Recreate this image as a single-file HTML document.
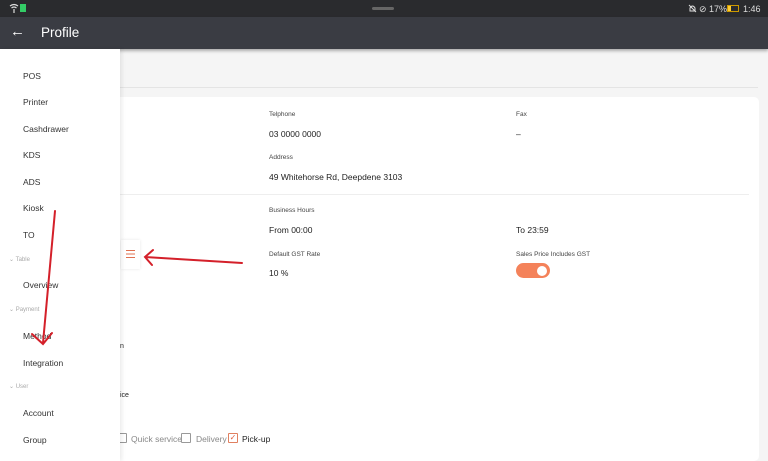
<!DOCTYPE html>
<html><head><meta charset="utf-8"><style>
*{margin:0;padding:0;box-sizing:border-box}
body{width:768px;height:461px;overflow:hidden;background:#f5f5f5;font-family:"Liberation Sans",sans-serif;position:relative;color:#333}
.sb{position:absolute;top:0;left:0;width:768px;height:17px;background:#2a2b2e;color:#ddd;font-size:9px}
.hdr{position:absolute;top:17px;left:0;width:768px;height:32px;background:#3a3c43;color:#fff;box-shadow:0 2px 3px rgba(0,0,0,.3)}
.hdr span{position:absolute;left:41px;top:8px;font-size:13.5px}
.line{position:absolute;left:120px;top:87px;width:638px;height:1px;background:#e4e4e4}
.card{position:absolute;left:100px;top:97px;width:659px;height:364px;background:#fff;border-radius:5px}
.t{position:absolute;font-size:6.5px;color:#444}
.v{position:absolute;font-size:8.5px;color:#222}
.dr{position:absolute;left:0;top:49px;width:120px;height:412px;background:#fff;box-shadow:2px 0 4px rgba(0,0,0,.08)}
.dr div{position:absolute;left:23px;font-size:8.5px;color:#333}
.dr .s{left:9px;font-size:6px;color:#aaa}
.cb{position:absolute;top:433px;width:10px;height:10px;border:1px solid #999;border-radius:1px}
</style></head><body>
<div class="sb">
<svg style="position:absolute;left:9px;top:3px" width="10" height="10"><path d="M1 3 Q5 0 9 3 M2.5 5 Q5 3 7.5 5 M5 6 V10" stroke="#ddd" stroke-width="1.2" fill="none"/></svg>
<span style="position:absolute;left:20px;top:4px;width:6px;height:8px;background:#3c6"></span>
<span style="position:absolute;left:372px;top:7px;width:22px;height:3px;border-radius:2px;background:#666"></span>
<svg style="position:absolute;left:688px;top:4px" width="9" height="9"><path d="M2 7 V4 Q4.5 0 7 4 V7 Z M1 1 L8 8" stroke="#ddd" stroke-width="1" fill="none"/></svg>
<span style="position:absolute;left:699px;top:4px">⊘ 17%</span>
<span style="position:absolute;left:727px;top:5px;width:12px;height:7px;border:1px solid #c90"><i style="display:block;width:3px;height:5px;background:#fc3"></i></span>
<span style="position:absolute;left:743px;top:4px">1:46</span>
</div>
<div class="hdr"><span style="left:10px;top:6px;font-size:15px">←</span><span>Profile</span></div>
<div class="line"></div>
<div class="card">
<div style="position:absolute;left:20px;right:10px;top:97px;height:1px;background:#eee"></div>
</div>
<div class="t" style="left:269px;top:111px">Telphone</div>
<div class="v" style="left:269px;top:129px">03 0000 0000</div>
<div class="t" style="left:516px;top:111px">Fax</div>
<div class="v" style="left:516px;top:129px">–</div>
<div class="t" style="left:269px;top:154px">Address</div>
<div class="v" style="left:269px;top:172px">49 Whitehorse Rd, Deepdene 3103</div>
<div class="t" style="left:269px;top:207px">Business Hours</div>
<div class="v" style="left:269px;top:225px">From 00:00</div>
<div class="v" style="left:516px;top:225px">To 23:59</div>
<div class="t" style="left:269px;top:251px">Default GST Rate</div>
<div class="v" style="left:269px;top:268px">10 %</div>
<div class="t" style="left:516px;top:251px">Sales Price Includes GST</div>
<div style="position:absolute;left:516px;top:263px;width:34px;height:15px;border-radius:8px;background:#f4825a"><i style="position:absolute;right:3px;top:2.5px;width:10px;height:10px;border-radius:50%;background:#fff"></i></div>
<div class="v" style="left:120px;top:343px;font-size:7px">n</div>
<div class="v" style="left:120px;top:392px;font-size:7px">ice</div>
<div class="cb" style="left:117px"></div>
<div class="v" style="left:131px;top:434px;color:#888">Quick service</div>
<div class="cb" style="left:181px"></div>
<div class="v" style="left:196px;top:434px;color:#888">Delivery</div>
<div class="cb" style="left:228px;border-color:#e08060;color:#e06040;font-size:8px;line-height:8px;text-align:center">✓</div>
<div class="v" style="left:242px;top:434px">Pick-up</div>
<div style="position:absolute;left:121px;top:240px;width:19px;height:29px;background:#fff;box-shadow:0 0 3px rgba(0,0,0,.1)">
<svg width="19" height="29"><path d="M5 10.5 H14 M5 14 H14 M5 17.5 H14" stroke="#e07050" stroke-width="1"/></svg></div>
<div class="dr">
<div style="top:22px">POS</div>
<div style="top:48px">Printer</div>
<div style="top:75px">Cashdrawer</div>
<div style="top:101px">KDS</div>
<div style="top:128px">ADS</div>
<div style="top:154px">Kiosk</div>
<div style="top:181px">TO</div>
<div class="s" style="top:207px">⌄ Table</div>
<div style="top:231px">Overview</div>
<div class="s" style="top:257px">⌄ Payment</div>
<div style="top:282px">Method</div>
<div style="top:309px">Integration</div>
<div class="s" style="top:334px">⌄ User</div>
<div style="top:359px">Account</div>
<div style="top:386px">Group</div>
</div>
<svg style="position:absolute;left:0;top:0" width="768" height="461">
<g stroke="#d4202a" stroke-width="2" fill="none" stroke-linecap="round">
<path d="M55 211 L43 343 M32 334 L43 344 L52 333"/>
<path d="M242 263 L145 257 M153 250 L145 257 L152 265"/>
</g></svg>
</body></html>
